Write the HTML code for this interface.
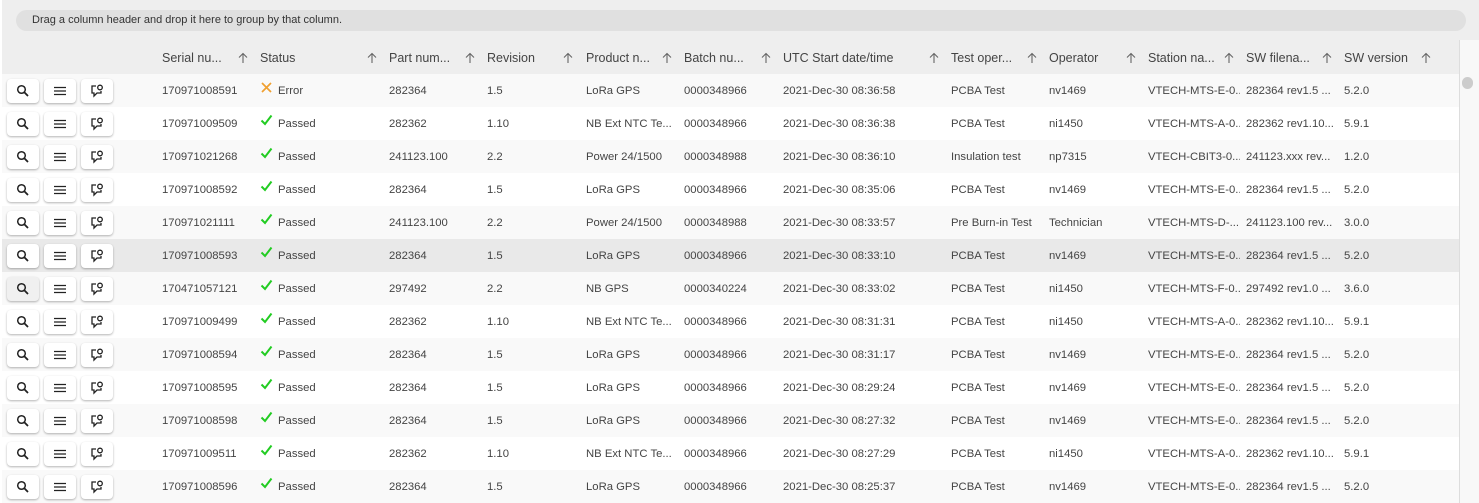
<!DOCTYPE html><html><head><style>
*{margin:0;padding:0;box-sizing:border-box}
body{width:1479px;height:503px;overflow:hidden;background:#fff;font-family:"Liberation Sans",sans-serif;position:relative;color:#444}
.top{position:absolute;left:2px;top:0;width:1477px;height:74px;background:#eeeeee}
.grp{position:absolute;left:14px;top:10px;width:1450px;height:21px;border-radius:11px;background:#e0e0e0;font-size:11px;color:#333;padding:4px 0 0 16px}
.h{position:absolute;top:51px;font-size:12.5px;color:#444;white-space:nowrap}
.ar{position:absolute;top:51px}
.row{position:absolute;left:2px;width:1457px;height:33px}
.c{position:absolute;top:11px;font-size:11.3px;color:#444;white-space:nowrap}
.b{position:absolute;top:5px;width:32px;height:24px;background:#fff;border-radius:4px;box-shadow:0 1px 2px rgba(0,0,0,.3)}
.b svg{position:absolute;left:9px;top:5px}
.sb{position:absolute;left:1459px;top:40px;width:20px;height:463px;background:#f8f8f8;border-left:1px solid #ddd}
.th{position:absolute;left:1462px;top:77px;width:11px;height:12px;border-radius:6px;background:#ccc}
.st{position:absolute;top:-4px;left:0}
</style></head><body>
<div class="top"><div class="grp">Drag a column header and drop it here to group by that column.</div></div>
<div class="sb"></div><div class="th"></div>
<div id="hdr"></div>
<div id="rows"></div>
<script>
var H=[["Serial nu...",162,242,76],["Status",260,371,100],["Part num...",389,469,92],["Revision",487,567,92],["Product n...",586,666,90],["Batch nu...",684,765,92],["UTC Start date/time",783,933,160],["Test oper...",951,1031,92],["Operator",1049,1130,92],["Station na...",1148,1228,92],["SW filena...",1246,1326,92],["SW version",1344,1425,92]];
var arr='<svg width="10" height="12" viewBox="0 0 10 12"><path d="M5 11V1.5M1 5.5L5 1.5 9 5.5" fill="none" stroke="#666" stroke-width="1.1"/></svg>';
var s="";H.forEach(function(h){s+='<div class="h" style="left:'+h[1]+'px">'+h[0]+'</div><div class="ar" style="left:'+(h[2]-4)+'px">'+arr+'</div>'});
document.getElementById("hdr").outerHTML=s;
var R=[["170971008591",0,"282364","1.5","LoRa GPS","0000348966","2021-Dec-30 08:36:58","PCBA Test","nv1469","VTECH-MTS-E-0...","282364 rev1.5 ...","5.2.0"],
["170971009509",1,"282362","1.10","NB Ext NTC Te...","0000348966","2021-Dec-30 08:36:38","PCBA Test","ni1450","VTECH-MTS-A-0...","282362 rev1.10...","5.9.1"],
["170971021268",1,"241123.100","2.2","Power 24/1500","0000348988","2021-Dec-30 08:36:10","Insulation test","np7315","VTECH-CBIT3-0...","241123.xxx rev...","1.2.0"],
["170971008592",1,"282364","1.5","LoRa GPS","0000348966","2021-Dec-30 08:35:06","PCBA Test","nv1469","VTECH-MTS-E-0...","282364 rev1.5 ...","5.2.0"],
["170971021111",1,"241123.100","2.2","Power 24/1500","0000348988","2021-Dec-30 08:33:57","Pre Burn-in Test","Technician","VTECH-MTS-D-...","241123.100 rev...","3.0.0"],
["170971008593",1,"282364","1.5","LoRa GPS","0000348966","2021-Dec-30 08:33:10","PCBA Test","nv1469","VTECH-MTS-E-0...","282364 rev1.5 ...","5.2.0"],
["170471057121",1,"297492","2.2","NB GPS","0000340224","2021-Dec-30 08:33:02","PCBA Test","ni1450","VTECH-MTS-F-0...","297492 rev1.0 ...","3.6.0"],
["170971009499",1,"282362","1.10","NB Ext NTC Te...","0000348966","2021-Dec-30 08:31:31","PCBA Test","ni1450","VTECH-MTS-A-0...","282362 rev1.10...","5.9.1"],
["170971008594",1,"282364","1.5","LoRa GPS","0000348966","2021-Dec-30 08:31:17","PCBA Test","nv1469","VTECH-MTS-E-0...","282364 rev1.5 ...","5.2.0"],
["170971008595",1,"282364","1.5","LoRa GPS","0000348966","2021-Dec-30 08:29:24","PCBA Test","nv1469","VTECH-MTS-E-0...","282364 rev1.5 ...","5.2.0"],
["170971008598",1,"282364","1.5","LoRa GPS","0000348966","2021-Dec-30 08:27:32","PCBA Test","nv1469","VTECH-MTS-E-0...","282364 rev1.5 ...","5.2.0"],
["170971009511",1,"282362","1.10","NB Ext NTC Te...","0000348966","2021-Dec-30 08:27:29","PCBA Test","ni1450","VTECH-MTS-A-0...","282362 rev1.10...","5.9.1"],
["170971008596",1,"282364","1.5","LoRa GPS","0000348966","2021-Dec-30 08:25:37","PCBA Test","nv1469","VTECH-MTS-E-0...","282364 rev1.5 ...","5.2.0"]];
var ic=['<svg width="14" height="14" viewBox="0 0 14 14"><circle cx="5.5" cy="5.5" r="3.8" fill="none" stroke="#222" stroke-width="1.5"/><path d="M8.3 8.3L12 12" stroke="#222" stroke-width="1.8"/></svg>',
'<svg width="14" height="14" viewBox="0 0 14 14"><path d="M1 3.5h12M1 7h12M1 10.5h12" stroke="#222" stroke-width="1.3"/></svg>',
'<svg width="14" height="14" viewBox="0 0 14 14"><path d="M6 2H2v7h2v3l3-3h4V7" fill="none" stroke="#222" stroke-width="1.3"/><circle cx="10" cy="3.5" r="2.3" fill="none" stroke="#222" stroke-width="1.3"/></svg>'];
var ok='<svg class="st" width="13" height="13" viewBox="0 0 13 13"><path d="M1.5 6.5L5 10 11.5 1.5" fill="none" stroke="#22cc22" stroke-width="2"/></svg>';
var er='<svg class="st" width="13" height="13" viewBox="0 0 13 13"><path d="M2 2L11 11M11 2L2 11" fill="none" stroke="#f0a030" stroke-width="1.7"/></svg>';
var o="";R.forEach(function(r,i){var bg=i==5?"#e9e9e9":(i%2==0?"#f9f9f9":"#fff");
o+='<div class="row" style="top:'+(74+i*33)+'px;background:'+bg+'">';
[5,42,79].forEach(function(x,k){o+='<div class="b" style="left:'+x+'px'+(i==6&&k==0?';background:#f0f0f0':'')+'">'+ic[k]+'</div>'});
var st=r[1]?ok+'<span style="margin-left:18px">Passed</span>':er+'<span style="margin-left:18px">Error</span>';
var vals=[r[0],st].concat(r.slice(2));
vals.forEach(function(v,k){o+='<div class="c" style="left:'+(H[k][1]-2)+'px;max-width:'+H[k][3]+'px;overflow:'+(k==1?'visible':'hidden')+'">'+v+'</div>'});
o+='</div>'});
document.getElementById("rows").outerHTML=o;
</script>
</body></html>
